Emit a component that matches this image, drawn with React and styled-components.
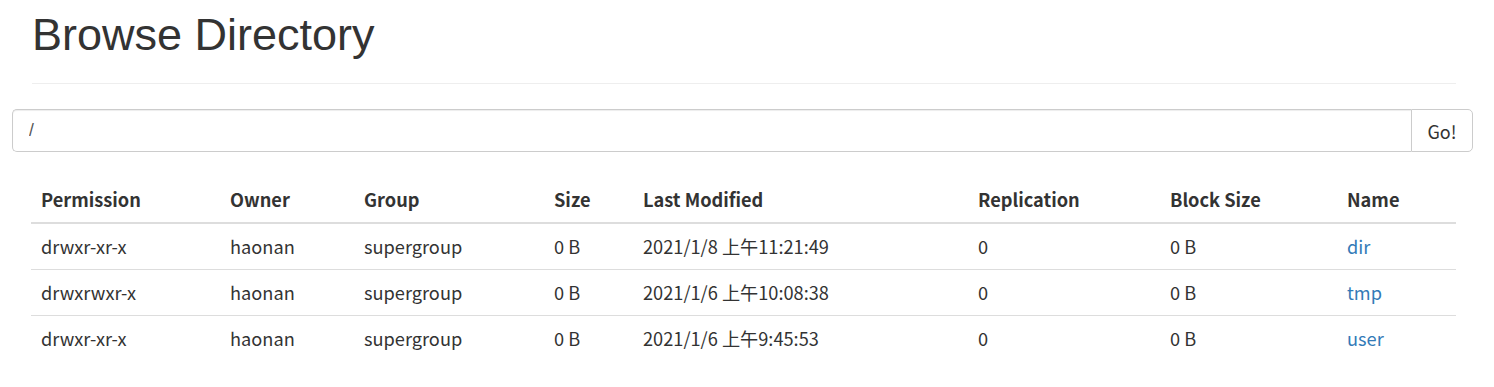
import React from "react";
import styled, { createGlobalStyle } from "styled-components";

const Global = createGlobalStyle`
  html, body { margin: 0; padding: 0; background: #fff; }
  body {
    color: #333;
    font-family: "Liberation Sans", Arial, sans-serif;
    font-size: 17.5px;
  }
`;

const Page = styled.div`
  width: 1494px;
  display: flex;
  flex-direction: column;
`;

const PageHeader = styled.div`
  margin: 0 38px 0 32px;
  padding-top: 10px;
  padding-bottom: 11px;
  border-bottom: 1px solid #eee;
`;

const Title = styled.h1`
  margin: 0 0 12.5px 0;
  font-family: "Liberation Sans", Arial, sans-serif;
  font-weight: 500;
  font-size: 45px;
  line-height: 49.5px;
  color: #333;
`;

const SearchForm = styled.form`
  display: flex;
  margin: 25px 21px 0 12px;
  height: 43px;
`;

const PathInput = styled.input`
  flex: 1;
  box-sizing: border-box;
  height: 43px;
  border: 1px solid #ccc;
  border-right: none;
  border-radius: 5px 0 0 5px;
  padding: 0 16px;
  font-family: "Liberation Sans", Arial, sans-serif;
  font-size: 17.5px;
  color: #555;
  outline: none;
  box-shadow: inset 0 1px 1px rgba(0, 0, 0, 0.075);
`;

const GoButton = styled.button`
  box-sizing: border-box;
  width: 62px;
  height: 43px;
  border: 1px solid #ccc;
  border-radius: 0 5px 5px 0;
  background: #fff;
  color: #333;
  font-family: "Noto Sans CJK SC", "Open Sans", sans-serif;
  font-size: 18px;
  padding: 0;
`;

const Table = styled.table`
  margin: 25px 38px 0 31px;
  width: 1425px;
  border-collapse: collapse;
  border-spacing: 0;
  table-layout: fixed;
  font-family: "Noto Sans CJK SC", "Open Sans", sans-serif;
  font-size: 18.2px;
  color: #333;
`;

const Th = styled.th`
  text-align: left;
  font-weight: 700;
  padding: 10px 10px;
  line-height: 25px;
  border-bottom: 2.5px solid #ddd;
  vertical-align: bottom;
  white-space: nowrap;
`;

const Td = styled.td`
  padding: 10px 10px;
  line-height: 25px;
  border-top: 1px solid #ddd;
  vertical-align: top;
  white-space: nowrap;
`;

const NameLink = styled.a`
  color: #337ab7;
  text-decoration: none;
`;

const widths = [189, 134, 190, 89, 335, 192, 177, 119];
const headers = [
  "Permission",
  "Owner",
  "Group",
  "Size",
  "Last Modified",
  "Replication",
  "Block Size",
  "Name",
];

const rows = [
  ["drwxr-xr-x", "haonan", "supergroup", "0 B", "2021/1/8 上午11:21:49", "0", "0 B", "dir"],
  ["drwxrwxr-x", "haonan", "supergroup", "0 B", "2021/1/6 上午10:08:38", "0", "0 B", "tmp"],
  ["drwxr-xr-x", "haonan", "supergroup", "0 B", "2021/1/6 上午9:45:53", "0", "0 B", "user"],
];

export default function App() {
  return (
    <Page>
      <Global />
      <PageHeader>
        <Title>Browse Directory</Title>
      </PageHeader>
      <SearchForm onSubmit={(e) => e.preventDefault()}>
        <PathInput defaultValue="/" />
        <GoButton type="submit">Go!</GoButton>
      </SearchForm>
      <Table>
        <colgroup>
          {widths.map((w, i) => (
            <col key={i} style={{ width: w }} />
          ))}
        </colgroup>
        <thead>
          <tr>
            {headers.map((h) => (
              <Th key={h}>{h}</Th>
            ))}
          </tr>
        </thead>
        <tbody>
          {rows.map((r, i) => (
            <tr key={i}>
              {r.slice(0, 7).map((c, j) => (
                <Td key={j}>{c}</Td>
              ))}
              <Td>
                <NameLink href="#">{r[7]}</NameLink>
              </Td>
            </tr>
          ))}
        </tbody>
      </Table>
    </Page>
  );
}
